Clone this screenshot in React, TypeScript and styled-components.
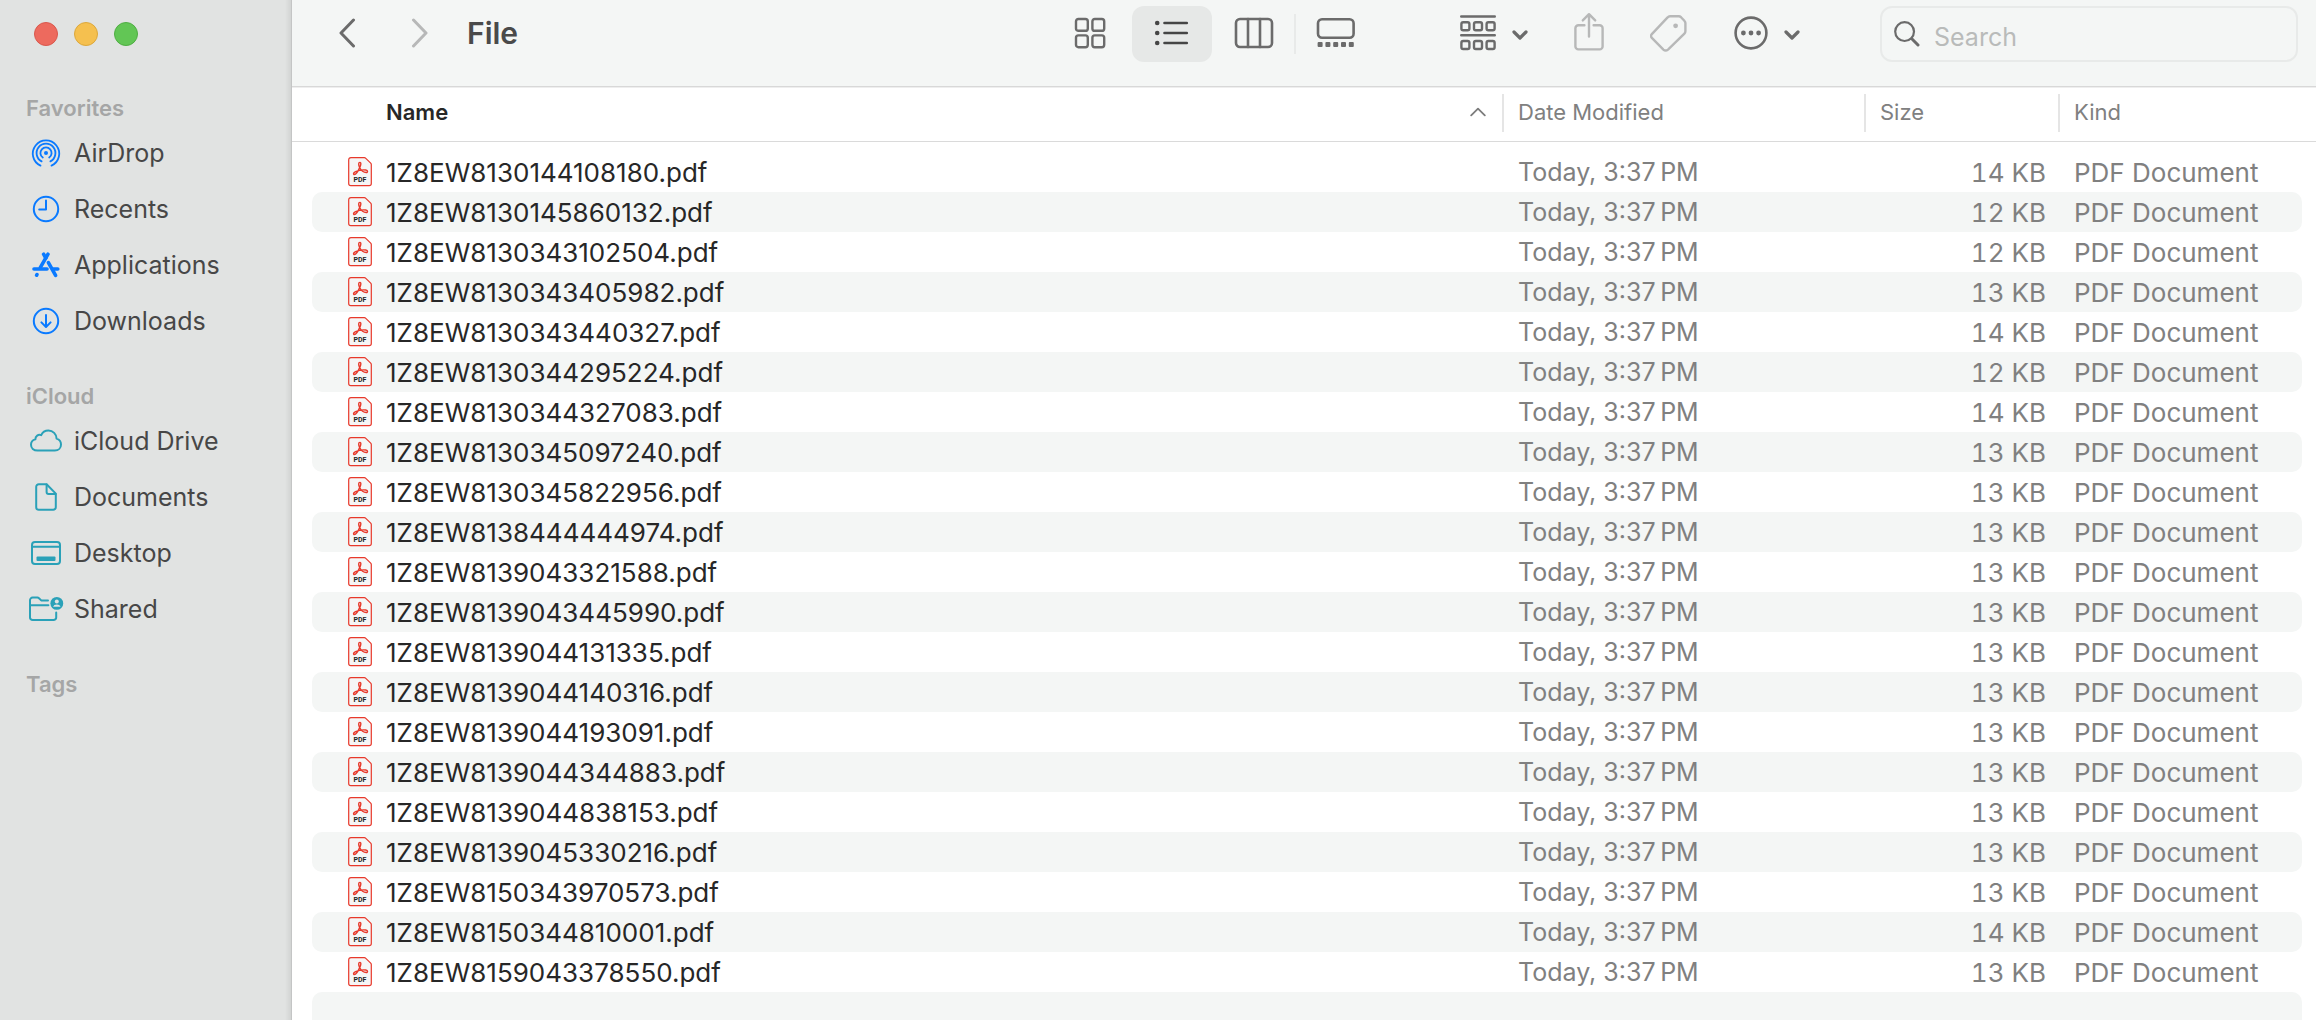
import React from "react";
import styled, { createGlobalStyle } from "styled-components";

const color = {
  blue: "#0a7aff",
  teal: "#2aa1b8",
  icon: "#6b6b6b",
  iconActive: "#454545",
  iconOff: "#b7b8b8",
  bar: "#f4f6f5",
  line: "#dadada",
  divider: "#e5e5e5",
  muted: "#808080",
  ink: "#272727",
};

const GlobalStyle = createGlobalStyle`
  *, *::before, *::after { box-sizing: border-box; }
  body {
    margin: 0;
    font-family: Inter, "Liberation Sans", sans-serif;
    background: #fff;
  }
  button { font: inherit; color: inherit; border: 0; padding: 0; background: none; }
  svg { display: block; flex: none; }
`;

const Window = styled.div`
  display: flex;
  height: 100vh;
  overflow: hidden;
`;

/* Sidebar */

const Sidebar = styled.aside`
  flex: none;
  width: 292px;
  background: linear-gradient(to left, #d2d4d3 0, #e1e3e2 6px);
  border-right: 1px solid #c4c5c5;
`;

const TrafficLights = styled.div`
  display: flex;
  gap: 16px;
  padding: 22px 34px;
`;

const Light = styled.button<{ $fill: string; $edge: string }>`
  width: 24px;
  height: 24px;
  border-radius: 50%;
  background: ${(p) => p.$fill};
  border: 1px solid ${(p) => p.$edge};
`;

const Section = styled.section`
  padding-bottom: 30px;

  &:first-of-type {
    padding-top: 23px;
  }
`;

const SectionTitle = styled.h2`
  margin: 0;
  padding-left: 26px;
  font-size: 22px;
  font-weight: 600;
  line-height: 34px;
  color: #a5a6a6;
`;

const PlaceList = styled.ul`
  margin: 0;
  padding: 0;
  list-style: none;
`;

const Place = styled.a`
  display: flex;
  align-items: center;
  gap: 10px;
  height: 56px;
  padding-left: 28px;
  font-size: 25px;
  color: #474747;
  text-decoration: none;
`;

/* Toolbar */

const Main = styled.main`
  flex: 1;
  min-width: 0;
`;

const Toolbar = styled.header`
  display: flex;
  align-items: flex-start;
  height: 87px;
  padding: 6px 18px 0 38px;
  background: ${color.bar};
  border-bottom: 1px solid #d8d8d8;
`;

const History = styled.nav`
  display: flex;
  gap: 55px;
  padding: 0 38px 0 8px;
`;

const ToolButton = styled.button<{ $off?: boolean }>`
  display: flex;
  align-items: center;
  gap: 16px;
  height: 54px;
  color: ${(p) => (p.$off ? color.iconOff : color.icon)};
`;

const Title = styled.h1`
  margin: 0;
  font-size: 30px;
  font-weight: 600;
  line-height: 54px;
  color: #4a4a4a;
`;

const Views = styled.div`
  display: flex;
  align-items: center;
  gap: 2px;
  margin: 0 84px 0 auto;
`;

const ViewButton = styled.button<{ $active?: boolean }>`
  display: flex;
  align-items: center;
  justify-content: center;
  width: 80px;
  height: 56px;
  padding-bottom: 2px;
  border-radius: 12px;
  color: ${(p) => (p.$active ? color.iconActive : color.icon)};
  background: ${(p) => (p.$active ? "#e6e8e7" : "none")};
`;

const LastView = styled.div`
  display: flex;
  align-items: center;
  margin-left: -2px;

  &::before {
    content: "";
    width: 2px;
    height: 40px;
    background: #e8eae9;
  }
`;

const Actions = styled.div`
  display: flex;
  gap: 46px;
  margin-right: 80px;
`;

const SearchBox = styled.label`
  display: flex;
  align-items: center;
  gap: 14px;
  width: 418px;
  height: 56px;
  padding: 0 12px;
  border: 2px solid #e8eae9;
  border-radius: 12px;
  color: ${color.icon};
`;

const SearchInput = styled.input`
  flex: 1;
  min-width: 0;
  border: 0;
  outline: 0;
  padding: 6px 0 0;
  background: none;
  font: inherit;
  font-size: 25px;
  color: ${color.ink};

  &::placeholder {
    color: #b9bbba;
    opacity: 1;
  }
`;

/* File list */

const FileTable = styled.table`
  display: block;
`;

const TableHead = styled.thead`
  display: block;
  border-top: 1px solid #eeeeee;
  border-bottom: 1px solid ${color.line};
  padding: 6px 14px 9px 20px;
`;

const columns = "minmax(0, 1fr) 362px 194px 244px";

const HeadRow = styled.tr`
  display: grid;
  grid-template-columns: ${columns};
`;

const HeadCell = styled.th<{ $sorted?: boolean }>`
  height: 38px;
  padding: 0 16px 0 14px;
  border-left: 2px solid ${color.divider};
  text-align: left;
  font-size: 22px;
  font-weight: ${(p) => (p.$sorted ? 600 : 400)};
  color: ${(p) => (p.$sorted ? color.ink : color.muted)};

  &:first-child {
    padding-left: 74px;
    border-left: 0;
  }
`;

const SortButton = styled.button`
  display: flex;
  align-items: center;
  justify-content: space-between;
  width: 100%;
  height: 36px;
`;

const TableBody = styled.tbody`
  display: block;
  padding: 10px 14px 0 20px;
`;

const FileRow = styled.tr`
  display: grid;
  grid-template-columns: ${columns};
  height: 40px;
  border-radius: 10px;

  &:nth-child(even) {
    background: ${color.bar};
  }
`;

const Cell = styled.td`
  padding: 1px 12px 0 16px;
  font-size: 26px;
  line-height: 39px;
  white-space: nowrap;
  color: ${color.muted};
`;

const NameCell = styled(Cell)`
  display: flex;
  gap: 14px;
  padding-left: 36px;
  color: ${color.ink};

  svg {
    margin-top: 4px;
  }
`;

const DateCell = styled(Cell)`
  font-size: 25px;
`;

const SizeCell = styled(Cell)`
  text-align: right;
  font-variant-numeric: tabular-nums;
`;

/* Icons */

type SvgProps = { w: number; h: number; sw?: number; stroke?: string; children: React.ReactNode };

const Svg = ({ w, h, sw = 2, stroke = "currentColor", children }: SvgProps) => (
  <svg
    width={w}
    height={h}
    viewBox={`0 0 ${w} ${h}`}
    fill="none"
    stroke={stroke}
    strokeWidth={sw}
    strokeLinecap="round"
    strokeLinejoin="round"
    aria-hidden="true"
  >
    {children}
  </svg>
);

const AirDropIcon = () => (
  <Svg w={36} h={36} sw={1.8} stroke={color.blue}>
    <path d="M12.5 30.6a13.2 13.2 0 1 1 11 0" />
    <path d="M13.6 26.4a9.4 9.4 0 1 1 8.8 0" />
    <path d="M14.8 22.6a5.6 5.6 0 1 1 6.4 0" />
    <circle cx="18" cy="18" r="2" fill={color.blue} stroke="none" />
  </Svg>
);

const RecentsIcon = () => (
  <Svg w={36} h={36} stroke={color.blue}>
    <circle cx="18" cy="18" r="12.2" />
    <path d="M18 9.5V18.5H11.2" />
  </Svg>
);

const ApplicationsIcon = () => (
  <Svg w={36} h={36} sw={3.6} stroke={color.blue}>
    <path d="M20 7.2 12.4 20.4" />
    <path d="M15.6 7.2 17.8 11" />
    <path d="M20.4 15.6 27.6 28.4" />
    <path d="M6 22H19" />
    <path d="M25.4 22H29.8" />
    <path d="M9 27.6 8.6 28.2" />
  </Svg>
);

const DownloadsIcon = () => (
  <Svg w={36} h={36} stroke={color.blue}>
    <circle cx="18" cy="18" r="12.2" />
    <path d="M18 12V23.6M13.4 19.4 18 24 22.6 19.4" />
  </Svg>
);

const CloudIcon = () => (
  <Svg w={36} h={36} stroke={color.teal}>
    <path d="M9.6 27.6C5.6 27.6 3 25 3 21.8c0-2.8 1.8-4.8 4.4-5.4-.2-3.4 3-5.4 5.8-4.2C14.4 9.4 17.2 7.6 20.4 7.6c4.6 0 8 3.4 8.2 8 2.6.8 4.4 3 4.4 5.8 0 3.6-2.6 6.2-6.2 6.2Z" />
  </Svg>
);

const DocumentIcon = () => (
  <Svg w={36} h={36} stroke={color.teal}>
    <path d="M18.6 5.2H10.8A2.6 2.6 0 0 0 8.2 7.8V28.2A2.6 2.6 0 0 0 10.8 30.8H25.2A2.6 2.6 0 0 0 27.8 28.2V14.6Z" />
    <path d="M18.6 5.4V13A2 2 0 0 0 20.6 15H27.6" />
  </Svg>
);

const DesktopIcon = () => (
  <Svg w={36} h={36} stroke={color.teal}>
    <rect x="4" y="7" width="28" height="22" rx="3" />
    <path d="M4 11.8H32" />
    <rect x="8.5" y="21.5" width="19" height="4.5" rx="1" fill={color.teal} stroke="none" />
  </Svg>
);

const SharedIcon = () => (
  <Svg w={36} h={36} stroke={color.teal}>
    <path d="M20 9.4H13.2L11 7.2A2.6 2.6 0 0 0 9.4 6.6H4.6A2.6 2.6 0 0 0 2 9.2V26.4A2.6 2.6 0 0 0 4.6 29H25.6A2.6 2.6 0 0 0 28.2 26.4V21.5" />
    <path d="M2 14.2H20.4" />
    <circle cx="28.8" cy="12.4" r="6.4" fill={color.teal} stroke="none" />
    <circle cx="28.8" cy="10.4" r="2" fill="#e1e3e2" stroke="none" />
    <path d="M25 15.8a4 3.2 0 0 1 7.6 0Z" fill="#e1e3e2" stroke="none" />
  </Svg>
);

const BackIcon = () => (
  <Svg w={18} h={30} sw={3}>
    <path d="M15.5 2 3 15 15.5 28" />
  </Svg>
);

const ForwardIcon = () => (
  <Svg w={18} h={30} sw={3}>
    <path d="M2.5 2 15 15 2.5 28" />
  </Svg>
);

const GridIcon = () => (
  <Svg w={32} h={32} sw={2.4}>
    {[2, 18.4].map((y) =>
      [2, 18.4].map((x) => <rect key={`${x}-${y}`} x={x} y={y} width="11.8" height="11.8" rx="2.4" />)
    )}
  </Svg>
);

const ListIcon = () => (
  <Svg w={36} h={28} sw={2.6}>
    {[4, 14, 24].map((y) => (
      <React.Fragment key={y}>
        <circle cx="3.2" cy={y} r="2.3" fill="currentColor" stroke="none" />
        <path d={`M10.500 ${y}H32.8`} />
      </React.Fragment>
    ))}
  </Svg>
);

const ColumnsIcon = () => (
  <Svg w={40} h={32} sw={2.6}>
    <rect x="2" y="2" width="36" height="28" rx="4" />
    <path d="M14 2V30M26 2V30" />
  </Svg>
);

const GalleryIcon = () => (
  <Svg w={40} h={32} sw={2.6}>
    <rect x="2" y="2.2" width="35.6" height="18.6" rx="4" />
    {[1.6, 9.4, 17.2, 25, 32.8].map((x) => (
      <rect key={x} x={x} y="25" width="5" height="5" rx="1" fill="currentColor" stroke="none" />
    ))}
  </Svg>
);

const GroupIcon = () => (
  <Svg w={36} h={36} sw={2.4}>
    <path d="M1.2 1.5H34.8M1.2 20.3H34.8" />
    {[7.2, 26].map((y) =>
      [1.4, 14, 26.6].map((x) => <rect key={`${x}-${y}`} x={x} y={y} width="8" height="8" rx="1.8" />)
    )}
  </Svg>
);

const ChevronIcon = () => (
  <Svg w={16} h={18} sw={3.2}>
    <path d="M2 8 8 14 14 8" />
  </Svg>
);

const ShareIcon = () => (
  <Svg w={30} h={42} sw={2.4}>
    <path d="M10.4 13.2H4.4A3 3 0 0 0 1.4 16.2V34.4A3 3 0 0 0 4.4 37.4H25.6A3 3 0 0 0 28.6 34.4V16.2A3 3 0 0 0 25.6 13.2H19.6" />
    <path d="M15 24.6V3M8.8 8.4 15 2.2 21.2 8.4" />
  </Svg>
);

const TagIcon = () => (
  <Svg w={38} h={38} sw={2.4}>
    <path d="M20 2.200H28.800Q30 2.200 31 3.200L34.400 6.800Q35.400 7.800 35.400 9V17.200Q35.400 18.600 34.400 19.600L18 35.600Q15.600 37.600 13.400 35.600L1.600 23.600Q.4 22 1.600 20.400L17.600 3.400Q18.600 2.200 20 2.200Z" />
    <circle cx="25.600" cy="11.800" r="2.400" fill="currentColor" stroke="none" />
  </Svg>
);

const MoreIcon = () => (
  <Svg w={34} h={34} sw={2.6}>
    <circle cx="17" cy="17" r="15.4" />
    {[9.4, 17, 24.6].map((x) => (
      <circle key={x} cx={x} cy="17" r="2.4" fill="currentColor" stroke="none" />
    ))}
  </Svg>
);

const SearchIcon = () => (
  <Svg w={26} h={26} sw={2.2}>
    <circle cx="10.6" cy="10.6" r="9.4" />
    <path d="M17.8 17.8 24 24" strokeWidth="3" />
  </Svg>
);

const SortIcon = () => (
  <Svg w={16} h={10} sw={1.8} stroke="#7c7c7c">
    <path d="M1.2 8.4 8 1.6 14.8 8.4" />
  </Svg>
);

const PdfIcon = () => (
  <svg width="24" height="30" viewBox="0 0 24 30" fill="none" aria-hidden="true">
    <path
      d="M3 .7H16.4Q17.2.7 17.8 1.3L22.7 6.2Q23.3 6.8 23.3 7.6V26.5Q23.3 28.6 21.2 28.6H2.8Q.7 28.6.7 26.5V2.9Q.7.7 3 .7Z"
      fill="#f6f6f6"
      stroke="#e8392b"
      strokeWidth="1.2"
    />
    <path
      d="M11.9 5.4C10.3 5.4 10.4 8 11.6 10.5C12.9 13.1 15.8 15.5 18.2 15.5C20 15.5 20 13.3 17.8 13C14.8 12.6 10.6 13.2 7.6 14.6C5 15.9 5.2 17.4 6.4 17.5C8.2 17.6 10.2 14 11.8 10.4C13 7.8 13.3 5.4 11.9 5.4Z"
      stroke="#e8392b"
      strokeWidth="1.4"
      strokeLinejoin="round"
    />
    <text
      x="12"
      y="25"
      textAnchor="middle"
      fontFamily='"Liberation Sans Narrow", Roboto, sans-serif'
      fontSize="7"
      fontWeight="700"
      fill="#222"
    >
      PDF
    </text>
  </svg>
);

/* Data */

const favorites = [
  { label: "AirDrop", Icon: AirDropIcon },
  { label: "Recents", Icon: RecentsIcon },
  { label: "Applications", Icon: ApplicationsIcon },
  { label: "Downloads", Icon: DownloadsIcon },
];

const icloud = [
  { label: "iCloud Drive", Icon: CloudIcon },
  { label: "Documents", Icon: DocumentIcon },
  { label: "Desktop", Icon: DesktopIcon },
  { label: "Shared", Icon: SharedIcon },
];

const files: [string, number][] = [
  ["1Z8EW8130144108180", 14],
  ["1Z8EW8130145860132", 12],
  ["1Z8EW8130343102504", 12],
  ["1Z8EW8130343405982", 13],
  ["1Z8EW8130343440327", 14],
  ["1Z8EW8130344295224", 12],
  ["1Z8EW8130344327083", 14],
  ["1Z8EW8130345097240", 13],
  ["1Z8EW8130345822956", 13],
  ["1Z8EW8138444444974", 13],
  ["1Z8EW8139043321588", 13],
  ["1Z8EW8139043445990", 13],
  ["1Z8EW8139044131335", 13],
  ["1Z8EW8139044140316", 13],
  ["1Z8EW8139044193091", 13],
  ["1Z8EW8139044344883", 13],
  ["1Z8EW8139044838153", 13],
  ["1Z8EW8139045330216", 13],
  ["1Z8EW8150343970573", 13],
  ["1Z8EW8150344810001", 14],
  ["1Z8EW8159043378550", 13],
];

type PlacesProps = { title: string; items: { label: string; Icon: React.FC }[] };

const Places = ({ title, items }: PlacesProps) => (
  <Section>
    <SectionTitle>{title}</SectionTitle>
    <PlaceList>
      {items.map(({ label, Icon }) => (
        <li key={label}>
          <Place href="#">
            <Icon />
            {label}
          </Place>
        </li>
      ))}
    </PlaceList>
  </Section>
);

export default function App() {
  return (
    <>
      <GlobalStyle />
      <Window>
        <Sidebar>
          <TrafficLights>
            <Light aria-label="Close" $fill="#ed6a5e" $edge="#d9584d" />
            <Light aria-label="Minimize" $fill="#f5c04f" $edge="#dca83c" />
            <Light aria-label="Zoom" $fill="#62c655" $edge="#4fae43" />
          </TrafficLights>
          <Places title="Favorites" items={favorites} />
          <Places title="iCloud" items={icloud} />
          <Places title="Tags" items={[]} />
        </Sidebar>

        <Main>
          <Toolbar>
            <History>
              <ToolButton aria-label="Back"><BackIcon /></ToolButton>
              <ToolButton aria-label="Forward" $off><ForwardIcon /></ToolButton>
            </History>
            <Title>File</Title>
            <Views>
              <ViewButton aria-label="Icons"><GridIcon /></ViewButton>
              <ViewButton aria-label="List" aria-pressed="true" $active><ListIcon /></ViewButton>
              <ViewButton aria-label="Columns"><ColumnsIcon /></ViewButton>
              <LastView>
                <ViewButton aria-label="Gallery"><GalleryIcon /></ViewButton>
              </LastView>
            </Views>
            <Actions>
              <ToolButton aria-label="Group"><GroupIcon /><ChevronIcon /></ToolButton>
              <ToolButton aria-label="Share" $off><ShareIcon /></ToolButton>
              <ToolButton aria-label="Edit tags" $off><TagIcon /></ToolButton>
              <ToolButton aria-label="More"><MoreIcon /><ChevronIcon /></ToolButton>
            </Actions>
            <SearchBox>
              <SearchIcon />
              <SearchInput type="search" placeholder="Search" aria-label="Search" />
            </SearchBox>
          </Toolbar>

          <FileTable>
            <TableHead>
              <HeadRow>
                <HeadCell $sorted aria-sort="ascending">
                  <SortButton>Name<SortIcon /></SortButton>
                </HeadCell>
                <HeadCell><SortButton>Date Modified</SortButton></HeadCell>
                <HeadCell><SortButton>Size</SortButton></HeadCell>
                <HeadCell><SortButton>Kind</SortButton></HeadCell>
              </HeadRow>
            </TableHead>
            <TableBody>
              {files.map(([name, size]) => (
                <FileRow key={name}>
                  <NameCell><PdfIcon />{name}.pdf</NameCell>
                  <DateCell>Today, 3:37{"\u202f"}PM</DateCell>
                  <SizeCell>{size} KB</SizeCell>
                  <Cell>PDF Document</Cell>
                </FileRow>
              ))}
              <FileRow aria-hidden="true" />
            </TableBody>
          </FileTable>
        </Main>
      </Window>
    </>
  );
}
